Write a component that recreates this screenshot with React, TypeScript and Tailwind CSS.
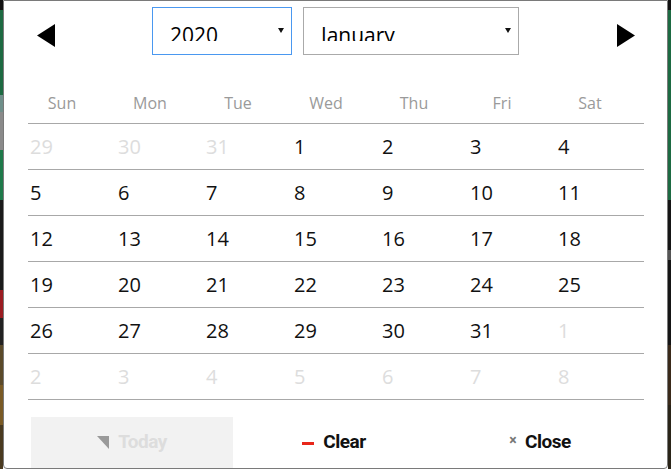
import React from "react";

type Cell = { d: number; cur: boolean };

function buildRows(): Cell[][] {
  const cells: Cell[] = [];
  [29, 30, 31].forEach((d) => cells.push({ d, cur: false }));
  for (let d = 1; d <= 31; d++) cells.push({ d, cur: true });
  let n = 1;
  while (cells.length < 42) cells.push({ d: n++, cur: false });
  const rows: Cell[][] = [];
  for (let i = 0; i < 6; i++) rows.push(cells.slice(i * 7, i * 7 + 7));
  return rows;
}

const days = ["Sun", "Mon", "Tue", "Wed", "Thu", "Fri", "Sat"];

function Select({ label, width, focused }: { label: string; width: string; focused?: boolean }) {
  return (
    <div
      className={
        "relative mt-[6px] h-[48px] border bg-white " +
        width +
        " " +
        (focused ? "border-[#4a98f0]" : "border-[#aaaaaa]")
      }
    >
      <div className="h-[33px] overflow-hidden pl-[17px] pt-[13px]">
        <span className="block text-[21px] leading-[28px] text-black">{label}</span>
      </div>
      <svg className="absolute right-[7px] top-[20px]" width="6" height="5" viewBox="0 0 6 5">
        <polygon points="0,0 6,0 3,5" fill="#111" />
      </svg>
    </div>
  );
}

export default function App() {
  const rows = buildRows();
  return (
    <div
      className="flex h-[469px] w-[671px] overflow-hidden bg-white"
      style={{ fontFamily: "'Open Sans', 'Noto Sans', sans-serif" }}
    >
      {/* left background strip */}
      <div className="flex w-[3px] flex-col">
        <div className="h-[10px] bg-[#121212]" />
        <div className="h-[85px] bg-[#1d6a42]" />
        <div className="h-[17px] bg-[#6f8f8a]" />
        <div className="h-[38px] bg-[#8a8a8a]" />
        <div className="h-[50px] bg-[#1f7a4a]" />
        <div className="h-[90px] bg-[#1a1a1a]" />
        <div className="h-[28px] bg-[#9b1c22]" />
        <div className="h-[27px] bg-[#222222]" />
        <div className="h-[40px] bg-[#5b4a2a]" />
        <div className="h-[40px] bg-[#7a5a25]" />
        <div className="flex-1 bg-[#4a3a20]" />
      </div>

      {/* panel */}
      <div className="flex h-[469px] w-[665px] flex-col rounded-b-[4px] border border-[#7a7a7a] bg-white">
        {/* header */}
        <div className="flex h-[80px] items-start pl-[33px]">
          <svg className="mt-[23px]" width="18" height="23" viewBox="0 0 18 23">
            <polygon points="18,0 18,23 0,11.5" fill="#000" />
          </svg>
          <div className="ml-[97px]">
            <Select label="2020" width="w-[140px]" focused />
          </div>
          <div className="ml-[11px]">
            <Select label="January" width="w-[216px]" />
          </div>
          <svg className="ml-[98px] mt-[23px]" width="18" height="23" viewBox="0 0 18 23">
            <polygon points="0,0 18,11.5 0,23" fill="#000" />
          </svg>
        </div>

        {/* weekday header */}
        <div className="ml-[24px] grid h-[43px] w-[616px] grid-cols-7 border-b border-[#a8a8a8]">
          {days.map((d) => (
            <div key={d} className="pr-[20px] pt-[12px] text-center text-[16px] leading-[20px] text-[#9a9a9a]">
              {d}
            </div>
          ))}
        </div>

        {/* day rows */}
        {rows.map((r, i) => (
          <div key={i} className="ml-[24px] grid h-[46px] w-[616px] grid-cols-7 border-b border-[#a8a8a8]">
            {r.map((c, j) => (
              <div
                key={j}
                className={
                  "flex items-center pl-[2px] text-[20px] leading-[24px] " +
                  (c.cur ? "text-[#111111]" : "text-[#dddddd]")
                }
              >
                {c.d}
              </div>
            ))}
          </div>
        ))}

        {/* footer */}
        <div
          className="ml-[27px] mt-[17px] flex h-[51px] w-[606px] text-[19px] font-bold tracking-[-0.5px]"
          style={{ fontFamily: "Roboto, 'Liberation Sans', sans-serif" }}
        >
          <div className="flex w-[202px] items-center justify-center gap-[9px] bg-[#f2f2f2] text-[#dddddd]">
            <svg width="12" height="13" viewBox="0 0 12 13">
              <polygon points="0,0 12,0 12,13" fill="#9a9a9a" />
            </svg>
            <span>Today</span>
          </div>
          <div className="flex w-[202px] items-center justify-center gap-[9px] text-[#111111]">
            <span className="mt-[1px] block h-[3px] w-[12px] bg-[#e8261a]" />
            <span>Clear</span>
          </div>
          <div className="flex w-[202px] items-center justify-center gap-[9px] pl-[8px] text-[#111111]">
            <span className="-mt-[4px] text-[14px] text-[#777777]">×</span>
            <span>Close</span>
          </div>
        </div>
      </div>

      {/* right background strip */}
      <div className="flex w-[3px] flex-col">
        <div className="h-[10px] bg-[#121212]" />
        <div className="h-[190px] bg-[#1d6a42]" />
        <div className="h-[50px] bg-[#151515]" />
        <div className="h-[10px] bg-[#555555]" />
        <div className="h-[85px] bg-[#151515]" />
        <div className="h-[60px] bg-[#3a2a1a]" />
        <div className="flex-1 bg-[#2a2418]" />
      </div>
    </div>
  );
}
